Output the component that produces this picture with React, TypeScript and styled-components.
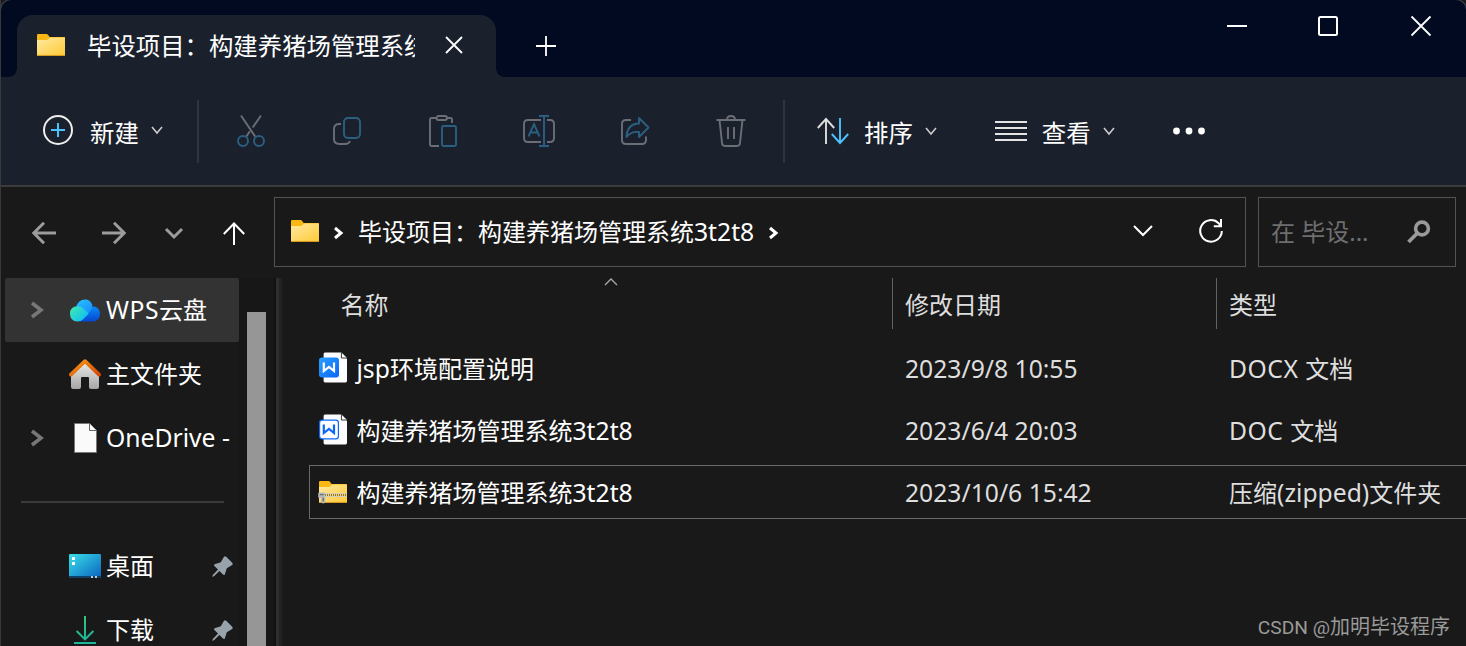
import React from "react";
import styled, { createGlobalStyle } from "styled-components";

const GlobalStyle = createGlobalStyle`
  * {
    box-sizing: border-box;
  }

  body {
    margin: 0;
    background: #191919;
    font-family: "Noto Sans", "Noto Sans CJK SC", sans-serif;
    font-size: 24px;
    color: #fff;
    overflow: hidden;
  }

  svg {
    display: block;
    flex: none;
    fill: none;
    overflow: visible;
  }
`;

// Latin runs are set slightly larger than the chinese glyphs
const Mixed = ({ text }: { text: string }) => (
  <>
    {text.split(/([\x20-\x7e]+)/).map((part, i) => (
      i % 2 ? <Latin key={i} $wide={/[A-Z]{3}/.test(part)}>{part}</Latin> : part
    ))}
  </>
);

const FolderIcon = ({ zipped }: { zipped?: boolean }) => (
  <svg width="28" height="22" viewBox="0 0 28 22">
    <defs>
      <linearGradient id="folder" x1="0" y1="0" x2="1" y2="1">
        <stop offset="0" stopColor="#ffe9a2" />
        <stop offset="1" stopColor="#ffca37" />
      </linearGradient>
    </defs>
    <path d="M0 1.2Q0 0 1.2 0H9.4Q10.4 0 11 .8L12.6 3H27Q28 3 28 4V21H0Z" fill="#fbb713" />
    <path d="M0 6H9.5Q10.6 6 11.4 5.2L13 3.4H28V21Q28 21.6 27.4 21.6H.6Q0 21.6 0 21Z" fill="url(#folder)" />
    <path d="M0 21.4H28" stroke="#e9a51b" strokeWidth=".9" />
    {zipped && (
      <>
        <path d="M6 12.6H28M6 15.4H28" stroke="#d3cdbb" strokeWidth="1.1" />
        <path d="M6 14H28" stroke="#8a7438" strokeWidth="2" strokeDasharray="1 1" />
        <path d="M-.8 12.5Q-.8 11.4.4 11.4H5Q6.2 11.4 6.2 12.6V20.5Q6.2 22.6 4.2 22.6Q2.2 22.6 2.2 20.6V17H.2Q-.8 17-.8 16Z" fill="#b9b9b9" />
        <path d="M4.2 16.8V20.6M.8 13.6H4.6" stroke="#6d6d6d" strokeWidth="1.4" />
      </>
    )}
  </svg>
);

const CloudIcon = () => (
  <svg width="30" height="23" viewBox="0 0 30 23">
    <defs>
      <linearGradient id="cloudL" x1="0" y1=".2" x2="1" y2=".9">
        <stop offset="0" stopColor="#3fe7b4" />
        <stop offset="1" stopColor="#0ab8fb" />
      </linearGradient>
      <linearGradient id="cloudR" x1="0" y1="0" x2="0" y2="1">
        <stop offset="0" stopColor="#0a8af6" />
        <stop offset="1" stopColor="#0647d2" />
      </linearGradient>
      <linearGradient id="cloudT" x1="0" y1="0" x2="1" y2="1">
        <stop offset="0" stopColor="#27c4ff" />
        <stop offset="1" stopColor="#178cff" />
      </linearGradient>
    </defs>
    <path d="M10 22.4L20 9Q23 6.6 26 8Q30 10.4 30 14.8Q30 22.4 22.4 22.4Z" fill="url(#cloudR)" />
    <path d="M6 8Q8.4.4 15 .4Q20.6.4 22.4 6Q22.6 10 18.6 14L8 12Z" fill="url(#cloudT)" />
    <path d="M7.6 7.2Q11 7.2 13.2 9.4L18.8 14.6L13.2 20.2Q10.8 22.4 7.6 22.4Q0 22.4 0 14.8Q0 7.2 7.6 7.2Z" fill="url(#cloudL)" />
  </svg>
);

const HomeIcon = () => (
  <svg width="32" height="30" viewBox="0 0 32 30">
    <defs>
      <linearGradient id="wall" x1="0" y1="0" x2="0" y2="1">
        <stop offset="0" stopColor="#e8e8e8" />
        <stop offset="1" stopColor="#a6a6a6" />
      </linearGradient>
      <linearGradient id="roof" x1="0" y1="0" x2="1" y2="1">
        <stop offset="0" stopColor="#fb9a14" />
        <stop offset="1" stopColor="#d44708" />
      </linearGradient>
    </defs>
    <path d="M16 4L30 16.5V28Q30 30 28 30H22Q20 30 20 28V19Q20 18 19 18H13Q12 18 12 19V28Q12 30 10 30H4Q2 30 2 28V16.5Z" fill="url(#wall)" />
    <path d="M1.9 15.6L16 2.2L30.1 15.6" stroke="url(#roof)" strokeWidth="3.8" strokeLinecap="round" strokeLinejoin="round" />
  </svg>
);

const PageIcon = () => (
  <svg width="24" height="30" viewBox="0 0 24 30">
    <path d="M1.5.5H16.5L23.5 7.5V29.5H1.5Z" fill="#fafafa" stroke="#777" />
    <path d="M16.5.5V7.5H23.5" fill="#fff" stroke="#666" />
  </svg>
);

const DesktopIcon = () => (
  <svg width="32" height="24" viewBox="0 0 32 24">
    <defs>
      <linearGradient id="desk" x1="0" y1="0" x2="1" y2="1">
        <stop offset="0" stopColor="#3adfe8" />
        <stop offset="1" stopColor="#0a63c0" />
      </linearGradient>
    </defs>
    <rect width="32" height="24" rx="1.2" fill="url(#desk)" />
    <path d="M0 22H32V23Q32 24 31 24H1Q0 24 0 23Z" fill="#0e4166" />
    <path d="M3 3H6V6H3ZM3 8H6V11H3Z" fill="#fff" />
    <path d="M22 22H24V24H22ZM26 22H28V24H26Z" fill="#b8cbd8" />
  </svg>
);

const DownloadIcon = () => (
  <svg width="22" height="28" viewBox="0 0 22 28">
    <defs>
      <linearGradient id="down" gradientUnits="userSpaceOnUse" x1="0" y1="0" x2="8" y2="28">
        <stop offset="0" stopColor="#35c878" />
        <stop offset="1" stopColor="#18b49c" />
      </linearGradient>
    </defs>
    <path d="M11 0V23M2.6 15L11 23.4L19.4 15M0 27H22" stroke="url(#down)" strokeWidth="2" />
  </svg>
);

const PinIcon = () => (
  <svg width="21" height="21" viewBox="0 0 21 21">
    <path d="M12 .8Q13-.4 14.2.8L20.2 6.8Q21.4 8 20.2 9L14.8 12.2L12.8 18.4Q12 19.6 11 18.6L7.4 15L2 20.2L.2 20.8L.8 19L6 13.6L2.4 10Q1.4 9 2.6 8.2L8.8 6.2Z" fill="#98a2aa" />
  </svg>
);

const DocIcon = ({ filled }: { filled?: boolean }) => (
  <svg width="28" height="31" viewBox="0 0 28 31">
    <defs>
      <linearGradient id="wps" x1="0" y1="0" x2="1" y2="1">
        <stop offset="0" stopColor="#2ba1ff" />
        <stop offset="1" stopColor="#0a64f5" />
      </linearGradient>
    </defs>
    <path d="M6 .5H22L28 6.5V29Q28 30.4 26.6 30.4H6Q4.6 30.4 4.6 29V2Q4.6.5 6 .5Z" fill="#fcfcfe" />
    <path d="M22.4.5V6H28" fill="#fff" stroke="#30343c" strokeWidth="1" />
    {filled ? (
      <rect y="5.5" width="20" height="20" rx="3" fill="url(#wps)" />
    ) : (
      <rect x=".6" y="6.1" width="18.8" height="18.8" rx="2.6" fill="#fff" stroke="#0b68f7" strokeWidth="1.2" />
    )}
    <path d="M4.8 10.5V19L10 15L15 19V10.5" stroke={filled ? "#fff" : "#0b68f7"} strokeWidth="2.2" />
  </svg>
);

const Chevron = ({ w, h, color = "#fff", weight = 2, dir = "down" }: {
  w: number;
  h: number;
  color?: string;
  weight?: number;
  dir?: "down" | "up" | "right";
}) => {
  const paths = {
    down: `M1 1L${w / 2} ${h - 1}L${w - 1} 1`,
    up: `M1 ${h - 1}L${w / 2} 1L${w - 1} ${h - 1}`,
    right: `M1 1L${w - 1} ${h / 2}L1 ${h - 1}`,
  };
  return (
    <svg width={w} height={h} viewBox={`0 0 ${w} ${h}`}>
      <path d={paths[dir]} stroke={color} strokeWidth={weight} />
    </svg>
  );
};

const GREY = "#6b6e75";
const BLUE = "#2b5f82";

const commands = [
  {
    name: "cut",
    art: (
      <>
        <path d="M6 .5L20.2 21.6M26 .5L17.7 12.5M14.8 16.2L11.4 21.6" stroke={GREY} />
        <circle cx="8" cy="26" r="5" stroke={BLUE} />
        <circle cx="24" cy="26" r="5" stroke={BLUE} />
      </>
    ),
  },
  {
    name: "copy",
    art: (
      <>
        <path d="M10 9H8.5Q3 9 3 14V24Q3 29 8.5 29H14Q18 29 19 26" stroke={GREY} />
        <rect x="13" y="3" width="16" height="20" rx="4" stroke={BLUE} />
      </>
    ),
  },
  {
    name: "paste",
    art: (
      <>
        <path d="M10 3H4.5Q3 3 3 4.5V29.5Q3 31 4.5 31H12M20 3H23.5Q25 3 25 4.5V8" stroke={GREY} />
        <rect x="9.5" y="1" width="10.5" height="4" rx="2" stroke={GREY} />
        <rect x="15" y="11" width="14" height="20" rx="1.5" stroke={BLUE} />
      </>
    ),
  },
  {
    name: "rename",
    art: (
      <>
        <path d="M18 5H5Q1 5 1 9V23Q1 27 5 27H18M24 5H27Q31 5 31 9V23Q31 27 27 27H24" stroke={GREY} />
        <path d="M21 1V31M16 1H26M16 31H26M5.5 21.5L11 9L16.5 21.5M7.5 17.5H14.5" stroke={BLUE} />
      </>
    ),
  },
  {
    name: "share",
    art: (
      <>
        <path d="M12 5H7Q3 5 3 9V25Q3 29 7 29H23Q27 29 27 25V21.5" stroke={GREY} />
        <path d="M20 3L29.5 12.5L20 22V17Q12 16 7.5 22Q8 9 20 8.5Z" stroke={BLUE} strokeLinejoin="round" />
      </>
    ),
  },
  {
    name: "delete",
    art: (
      <path d="M1.5 5H30.5M12 5Q12 1 16 1Q20 1 20 5M4.5 5L7 28Q7.3 31 10 31H22Q24.7 31 25 28L27.5 5M13 12V24M19 12V24" stroke={GREY} />
    ),
  },
];

const places = [
  { label: "WPS云盘", icon: <CloudIcon />, expandable: true, active: true },
  { label: "主文件夹", icon: <HomeIcon /> },
  { label: "OneDrive -", icon: <PageIcon />, expandable: true },
];

const pinned = [
  { label: "桌面", icon: <DesktopIcon /> },
  { label: "下载", icon: <DownloadIcon /> },
];

const files = [
  { name: "jsp环境配置说明", date: "2023/9/8 10:55", type: "DOCX 文档", icon: <DocIcon filled /> },
  { name: "构建养猪场管理系统3t2t8", date: "2023/6/4 20:03", type: "DOC 文档", icon: <DocIcon /> },
  { name: "构建养猪场管理系统3t2t8", date: "2023/10/6 15:42", type: "压缩(zipped)文件夹", icon: <FolderIcon zipped />, focused: true },
];

export default function App() {
  return (
    <Window>
      <GlobalStyle />
      <TitleBar>
        <Tab>
          <FolderIcon />
          <TabTitle>毕设项目：构建养猪场管理系统3t2t8</TabTitle>
          <svg width="18" height="18" viewBox="0 0 18 18">
            <path d="M1 1L17 17M17 1L1 17" stroke="#fff" strokeWidth="1.8" />
          </svg>
        </Tab>
        <NewTab>
          <svg width="20" height="20" viewBox="0 0 20 20">
            <path d="M10 0V20M0 10H20" stroke="#fff" strokeWidth="1.8" />
          </svg>
        </NewTab>
        <WindowButtons>
          <svg width="20" height="20" viewBox="0 0 20 20">
            <path d="M0 10H20" stroke="#fff" strokeWidth="2" />
          </svg>
          <svg width="20" height="20" viewBox="0 0 20 20">
            <rect x="1" y="1" width="18" height="18" rx="1.5" stroke="#fff" strokeWidth="2" />
          </svg>
          <svg width="20" height="20" viewBox="0 0 20 20">
            <path d="M.5.5L19.5 19.5M19.5.5L.5 19.5" stroke="#fff" strokeWidth="1.8" />
          </svg>
        </WindowButtons>
      </TitleBar>

      <Toolbar>
        <NewButton>
          <svg width="30" height="30" viewBox="0 0 30 30">
            <circle cx="15" cy="15" r="14" stroke="#eee" strokeWidth="2" />
            <path d="M15 8V22M8 15H22" stroke="#4cc2ff" strokeWidth="2" />
          </svg>
          <Label>新建</Label>
          <Chevron w={12} h={8} color="#ccc" weight={1.6} />
        </NewButton>
        <Divider />
        {commands.map((c) => (
          <Command key={c.name}>
            <svg width="32" height="32" viewBox="0 0 32 32" strokeWidth="1.9">{c.art}</svg>
          </Command>
        ))}
        <Divider />
        <MenuButton $left={32}>
          <svg width="32" height="28" viewBox="0 0 32 28">
            <path d="M9 27V2M.8 11L9 2L17.2 11" stroke="#ddd" strokeWidth="1.9" />
            <path d="M23 1V26M14.8 17L23 26L31.2 17" stroke="#4cc2ff" strokeWidth="1.9" />
          </svg>
          <Label>排序</Label>
          <Chevron w={12} h={8} color="#ccc" weight={1.6} />
        </MenuButton>
        <MenuButton $left={58}>
          <svg width="32" height="22" viewBox="0 0 32 22">
            <path d="M0 2H32M0 8H32M0 14H32M0 20H32" stroke="#e4e4e4" strokeWidth="2" />
          </svg>
          <Label>查看</Label>
          <Chevron w={12} h={8} color="#ccc" weight={1.6} />
        </MenuButton>
        <MenuButton $left={58}>
          <svg width="32" height="8" viewBox="0 0 32 8">
            <g fill="#fff">
              <circle cx="3.5" cy="4" r="3.4" />
              <circle cx="16" cy="4" r="3.4" />
              <circle cx="28.5" cy="4" r="3.4" />
            </g>
          </svg>
        </MenuButton>
      </Toolbar>

      <NavBar>
        <NavButtons>
          <svg width="24" height="22" viewBox="0 0 24 22">
            <path d="M24 11H2M12 .8L1.8 11L12 21.2" stroke="#9c9c9c" strokeWidth="3" />
          </svg>
          <svg width="24" height="22" viewBox="0 0 24 22">
            <path d="M0 11H22M12 .8L22.2 11L12 21.2" stroke="#9c9c9c" strokeWidth="3" />
          </svg>
          <Chevron w={18} h={10} color="#9c9c9c" weight={3} />
          <svg width="22" height="23" viewBox="0 0 22 23">
            <path d="M11 23V1.5M.8 12L11 1.5L21.2 12" stroke="#fff" strokeWidth="2" />
          </svg>
        </NavButtons>
        <AddressBox>
          <FolderIcon />
          <Crumb>
            <Chevron w={8} h={12} weight={3} dir="right" />
            <CrumbText><Mixed text="毕设项目：构建养猪场管理系统3t2t8" /></CrumbText>
            <Chevron w={8} h={12} weight={3} dir="right" />
          </Crumb>
          <Chevron w={20} h={11} weight={2} />
          <svg width="24" height="24" viewBox="0 0 24 24">
            <path d="M22.8 12A10.8 10.8 0 1 1 19.6 4.2L22 6.8M22 0V7.2H14.8" stroke="#fff" strokeWidth="2" />
          </svg>
        </AddressBox>
        <SearchBox>
          <SearchHint>在 毕设...</SearchHint>
          <svg width="24" height="24" viewBox="0 0 24 24">
            <circle cx="15" cy="8.5" r="6.4" stroke="#9a9a9a" strokeWidth="3.6" />
            <path d="M10.5 13L1.5 22" stroke="#9a9a9a" strokeWidth="3.8" />
          </svg>
        </SearchBox>
      </NavBar>

      <Body>
        <Sidebar>
          {places.map((p) => (
            <Place key={p.label} $active={p.active}>
              <Expander>{p.expandable && <Chevron w={11} h={16} color="#777" weight={3.6} dir="right" />}</Expander>
              <PlaceIcon>{p.icon}</PlaceIcon>
              <PlaceLabel><Mixed text={p.label} /></PlaceLabel>
            </Place>
          ))}
          <SidebarRule />
          {pinned.map((p) => (
            <Place key={p.label}>
              <Expander />
              <PlaceIcon>{p.icon}</PlaceIcon>
              <PlaceLabel>{p.label}</PlaceLabel>
              <Pin><PinIcon /></Pin>
            </Place>
          ))}
        </Sidebar>
        <ScrollTrack>
          <ScrollThumb />
        </ScrollTrack>
        <Splitter />
        <FileList>
          <HeaderRow>
            <HeaderCell>
              名称
              <SortMark><Chevron w={14} h={8} color="#aaa" weight={1.3} dir="up" /></SortMark>
            </HeaderCell>
            <HeaderCell>修改日期</HeaderCell>
            <HeaderCell>类型</HeaderCell>
          </HeaderRow>
          {files.map((f) => (
            <FileRow key={f.date} $focused={f.focused}>
              <FileName>
                {f.icon}
                <FileText><Mixed text={f.name} /></FileText>
              </FileName>
              <FileInfo><Mixed text={f.date} /></FileInfo>
              <FileInfo><Mixed text={f.type} /></FileInfo>
            </FileRow>
          ))}
        </FileList>
      </Body>
      <Watermark><span>CSDN @</span>加明毕设程序</Watermark>
    </Window>
  );
}

const Latin = styled.span<{ $wide?: boolean }>`
  font-size: 24.7px;
  line-height: 1;
  letter-spacing: ${props => (props.$wide ? "0.5px" : "0")};
  white-space: pre;
`;

const Window = styled.div`
  position: relative;
  width: 1466px;
  height: 646px;
  display: flex;
  flex-direction: column;
  border-left: 1px solid #393939;
  background: #191919;
  overflow: hidden;
  white-space: nowrap;
`;

const TitleBar = styled.div`
  height: 77px;
  flex: none;
  display: flex;
  padding: 15px 0 0 16px;
  background: #010a20;
  border-radius: 10px 10px 0 0;
  box-shadow: 0 0 0 1px #3d444e;
`;

const Tab = styled.div`
  position: relative;
  width: 479px;
  height: 62px;
  display: flex;
  align-items: center;
  padding: 0 33px 3px 20px;
  background: #1b212c;
  border-radius: 16px 16px 0 0;

  /* flared feet of the tab */
  &::before,
  &::after {
    content: "";
    position: absolute;
    bottom: 0;
    width: 8px;
    height: 8px;
  }

  &::before {
    left: -8px;
    background: radial-gradient(circle at 0 0, transparent 7.5px, #1b212c 8px);
  }

  &::after {
    right: -8px;
    background: radial-gradient(circle at 100% 0, transparent 7.5px, #1b212c 8px);
  }
`;

const TabTitle = styled.div`
  width: 328px;
  margin: 2px 30px 0 22px;
  overflow: hidden;
  font-size: 24.4px;
  line-height: 34px;
`;

const NewTab = styled.div`
  margin: 21px 0 0 40px;
`;

const WindowButtons = styled.div`
  display: flex;
  gap: 71px;
  margin: 1px 35px 0 auto;

  svg:last-child {
    margin-left: 2px;
  }
`;

const Toolbar = styled.div`
  height: 110px;
  flex: none;
  display: flex;
  align-items: center;
  padding: 0 0 0 42px;
  background: #1b212c;
  border-bottom: 2px solid #3b3b3b;
`;

const MenuButton = styled.div<{ $left?: number }>`
  display: flex;
  align-items: center;
  margin-left: ${props => props.$left || 0}px;
`;

const Label = styled.span`
  margin: 3px 12px 0 15px;
  font-size: 24.4px;
  line-height: 34px;
`;

const NewButton = styled(MenuButton)`
  width: 154px;
  padding-bottom: 2px;

  ${Label} {
    margin: 6px 12px 0 17px;
  }
`;

const Divider = styled.div`
  width: 2px;
  height: 63px;
  background: #2f343f;
`;

const Command = styled.div`
  width: 96px;
  display: flex;
  justify-content: center;

  ${Divider} + & {
    margin-left: 4px;
  }

  & + ${Divider} {
    margin-left: 4px;
  }
`;

const NavBar = styled.div`
  height: 91px;
  flex: none;
  display: flex;
  padding: 10px 10px 11px 0;
`;

const NavButtons = styled.div`
  width: 273px;
  display: flex;
  align-items: center;
  padding: 2px 0 0 31px;

  svg:nth-child(2) {
    margin-left: 46px;
  }

  svg:nth-child(3) {
    margin-left: 39px;
  }

  svg:nth-child(4) {
    margin-left: 40px;
  }
`;

const Box = styled.div`
  height: 70px;
  display: flex;
  align-items: center;
  border: 1px solid #535353;
`;

const AddressBox = styled(Box)`
  width: 972px;
  padding: 0 22px 3px 16px;

  & > svg:last-child {
    margin-left: 46px;
  }
`;

const Crumb = styled.div`
  flex: 1;
  display: flex;
  align-items: center;
  margin: 4px 0 0 15px;
`;

const CrumbText = styled.span`
  margin: -1px 15px 0 16px;
  line-height: 34px;
`;

const SearchBox = styled(Box)`
  flex: 1;
  justify-content: space-between;
  margin-left: 12px;
  padding: 0 24px 0 12px;
  color: #6f6f6f;
`;

const SearchHint = styled.span`
  margin-top: -1px;
  line-height: 34px;
`;

const Body = styled.div`
  flex: 1;
  display: flex;
  min-height: 0;
`;

const Sidebar = styled.div`
  width: 238px;
  padding-left: 4px;
`;

const Place = styled.div<{ $active?: boolean }>`
  height: 64px;
  display: flex;
  align-items: center;
  border-radius: 2px;
  background: ${props => (props.$active ? "#333" : "none")};
`;

const Expander = styled.div`
  width: 62px;
  padding-left: 26px;
`;

const PlaceIcon = styled.div`
  width: 36px;
  display: flex;
  justify-content: center;
  margin-right: 3px;
`;

const PlaceLabel = styled.span`
  line-height: 34px;
`;

const Pin = styled.div`
  margin: 0 6px 0 auto;
`;

const SidebarRule = styled.div`
  width: 203px;
  height: 2px;
  margin: 31px 0 31px 16px;
  background: #3a3a3a;
`;

const ScrollTrack = styled.div`
  width: 35px;
  padding: 34px 8px 0;
  background: #171717;
`;

const ScrollThumb = styled.div`
  width: 19px;
  height: 100%;
  background: #969696;
`;

const Splitter = styled.div`
  width: 8px;
  border-left: 2px solid #111;
  border-right: 3px solid #222;
  background: #2e2e2e;
`;

const FileList = styled.div`
  flex: 1;
  padding-left: 27px;
`;

const Columns = styled.div`
  display: grid;
  grid-template-columns: 583px 324px 1fr;
`;

const HeaderRow = styled(Columns)`
  height: 51px;
  margin-bottom: 12px;
`;

const HeaderCell = styled.div`
  position: relative;
  padding: 10px 0 0 12px;
  line-height: 34px;
  color: #dedede;

  & + & {
    border-left: 1px solid #636363;
  }

  &:first-child {
    padding-left: 31.5px;
  }
`;

const SortMark = styled.div`
  position: absolute;
  top: 0;
  left: 294.5px;
`;

const FileRow = styled(Columns)<{ $focused?: boolean }>`
  height: 54px;
  margin-bottom: 8px;
  align-items: center;
  border: 1px solid ${props => (props.$focused ? "#6a6a6a" : "transparent")};
  border-right: none;
`;

const FileName = styled.div`
  display: flex;
  align-items: center;
  padding-left: 8.5px;
  line-height: 34px;

  svg {
    margin: 0 10px 1px 0;
  }
`;

const FileText = styled.span`
  padding-top: 2px;
`;

const FileInfo = styled.div`
  padding: 2px 0 0 12px;
  line-height: 34px;
  color: #dedede;
`;

const Watermark = styled.div`
  position: absolute;
  right: 16px;
  bottom: 3px;
  font-family: Roboto, "Noto Sans CJK SC", sans-serif;
  font-size: 20px;
  line-height: 30px;
  color: #9a9a9a;

  span {
    font-size: 19.2px;
  }
`;
